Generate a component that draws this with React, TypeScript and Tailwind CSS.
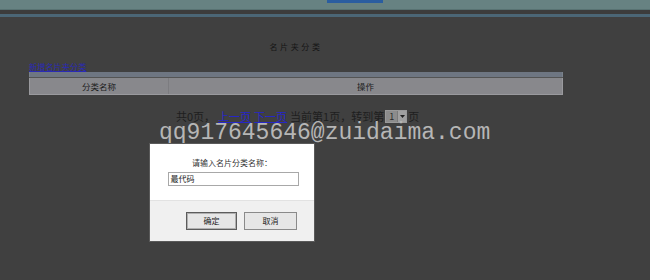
import React from "react";

export default function App() {
  return (
    <div className="relative w-[650px] h-[280px] overflow-hidden bg-[#404040] font-['Noto_Sans_CJK_SC',sans-serif]">
      {/* top bar */}
      <div className="h-[9px] bg-[#678282] pl-[327px]">
        <div className="w-[56px] h-[3px] bg-[#2a5da0]" />
      </div>
      <div className="h-[1px] bg-[#587272]" />
      <div className="h-[4px] bg-[#3c3c3c]" />
      <div className="h-[3px] bg-[#4b6676]" />

      {/* content */}
      <div className="ml-[29px] w-[534px] flex flex-col">
        <div className="mt-[25px] h-[10px] flex items-center justify-center text-[8px] leading-[10px] tracking-[2.6px] text-[#151515]">
          名片夹分类
        </div>
        <div className="mt-[9px] h-[10px] flex items-center">
          <span className="text-[8.2px] leading-[10px] text-[#2a2ab4] underline">新增名片夹分类</span>
        </div>
        <div className="mt-[1px] flex flex-col">
          <div className="h-[5px] bg-[#6e7682] border-x border-[#7a828c]" />
          <div className="h-[1px] bg-[#545454]" />
          <div className="h-[17px] flex bg-[#88888c] border-x border-b border-[#9a9a9e] text-[8.5px] text-[#1c1c1c]">
            <div className="w-[139px] flex items-center justify-center border-r border-[#7c7c80]">分类名称</div>
            <div className="flex-1 flex items-center justify-center">操作</div>
          </div>
        </div>
      </div>

      {/* pagination */}
      <div className="mt-[12px] ml-[176px] h-[18px] flex items-center text-[11px] leading-[18px] text-[#1e1e1e] whitespace-pre">
        <span>共0页，</span>
        <span className="ml-[3px] text-[#2626c8] underline">上一页</span>
        <span className="ml-[3px] text-[#2626c8] underline">下一页</span>
        <span className="ml-[3px]">当前第1页，转到第</span>
        <div className="ml-[1px] w-[22px] h-[13px] flex items-center border border-[#9a9a9a] bg-[#8c8c8c]">
          <span className="flex-1 pl-[3px] text-[9px] leading-[11px] text-[#2a2a2a]">1</span>
          <div className="w-[9px] h-[11px] flex items-center justify-center bg-[#a0a0a0] border-l border-[#7a7a7a]">
            <svg width="5" height="3" viewBox="0 0 5 3"><path d="M0 0h5L2.5 3z" fill="#222" /></svg>
          </div>
        </div>
        <span className="ml-[1px]">页</span>
      </div>

      {/* watermark */}
      <div className="absolute left-[159px] top-[121px] font-['Liberation_Mono',monospace] text-[23px] leading-[24px] text-[#b6b6b6] whitespace-pre">
        qq917645646@zuidaima.com
      </div>

      {/* dialog */}
      <div className="absolute left-[149px] top-[143px] w-[166px] h-[99px] border border-[#5a5a5a] bg-white flex flex-col">
        <div className="h-[56px] flex flex-col items-center">
          <div className="mt-[14px] h-[10px] text-[8px] leading-[10px] text-[#333]">请输入名片分类名称：</div>
          <div className="mt-[4px] ml-[2px] w-[131px] h-[14px] border border-[#a8a8a8] flex items-center pl-[2px] text-[8px] text-[#222]">
            最代码
          </div>
        </div>
        <div className="flex-1 bg-[#f0f0f0] border-t border-[#e2e2e2] flex justify-end items-start pr-[17px] pt-[11px] gap-[7px]">
          <div className="w-[51px] h-[18px] flex items-center justify-center bg-[#e6e6e6] border border-[#5c5c5c] shadow-[inset_0_0_0_1px_#b0b0b0] text-[8px] text-[#222]">确定</div>
          <div className="w-[53px] h-[18px] flex items-center justify-center bg-[#e6e6e6] border border-[#8a8a8a] text-[8px] text-[#222]">取消</div>
        </div>
      </div>
    </div>
  );
}
